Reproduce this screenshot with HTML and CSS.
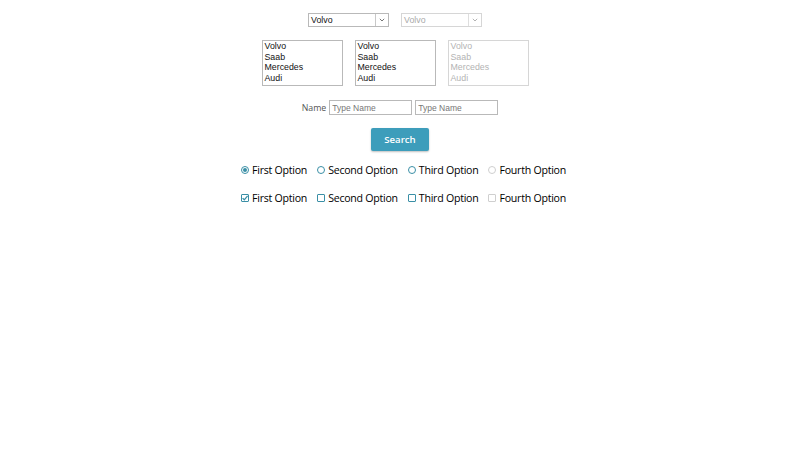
FILE: index.html
```html
<!DOCTYPE html>
<html lang="en">
<head>
<meta charset="utf-8">
<title>Form controls</title>
<link rel="stylesheet" href="styles.css">
</head>
<body>
<main class="page">
  <div class="row row-selects">
    <div class="select">
      <span class="select-value">Volvo</span>
      <span class="select-arrow"><svg width="6" height="4" viewBox="0 0 6 4"><path d="M0.8 0.8 L3 3 L5.2 0.8" fill="none" stroke="#666" stroke-width="0.9"/></svg></span>
    </div>
    <div class="select is-disabled">
      <span class="select-value">Volvo</span>
      <span class="select-arrow"><svg width="6" height="4" viewBox="0 0 6 4"><path d="M0.8 0.8 L3 3 L5.2 0.8" fill="none" stroke="#aaa" stroke-width="0.9"/></svg></span>
    </div>
  </div>

  <div class="row row-lists">
    <div class="listbox">
      <div>Volvo</div><div>Saab</div><div>Mercedes</div><div>Audi</div>
    </div>
    <div class="listbox">
      <div>Volvo</div><div>Saab</div><div>Mercedes</div><div>Audi</div>
    </div>
    <div class="listbox is-disabled">
      <div>Volvo</div><div>Saab</div><div>Mercedes</div><div>Audi</div>
    </div>
  </div>

  <div class="row row-name">
    <label class="name-label">Name</label>
    <input class="text-input" type="text" placeholder="Type Name">
    <input class="text-input" type="text" placeholder="Type Name">
  </div>

  <div class="row row-button">
    <button class="btn" type="button">Search</button>
  </div>

  <div class="row row-options">
    <span class="opt"><span class="radio is-checked"></span>First Option</span>
    <span class="opt"><span class="radio"></span>Second Option</span>
    <span class="opt"><span class="radio"></span>Third Option</span>
    <span class="opt"><span class="radio is-disabled"></span>Fourth Option</span>
  </div>

  <div class="row row-options row-checks">
    <span class="opt"><span class="check is-checked"><svg width="8" height="8" viewBox="0 0 8 8"><path d="M1.6 4.1 L3.3 5.8 L6.6 1.9" fill="none" stroke="#3a8fa6" stroke-width="1.3"/></svg></span>First Option</span>
    <span class="opt"><span class="check"></span>Second Option</span>
    <span class="opt"><span class="check"></span>Third Option</span>
    <span class="opt"><span class="check is-disabled"></span>Fourth Option</span>
  </div>
</main>
</body>
</html>
```

FILE: styles.css
```css
* { box-sizing: border-box; }

body {
  margin: 0;
  background: #fff;
  font-family: "Open Sans", "Liberation Sans", sans-serif;
  color: #222;
}

.page {
  padding-top: 13px;
}

.row {
  display: flex;
  justify-content: center;
  align-items: center;
}

/* selects */
.row-selects {
  gap: 12px;
  padding-right: 10px;
}

.select {
  width: 81px;
  height: 14px;
  border: 1px solid #b9b9b9;
  display: flex;
  align-items: stretch;
  font-family: "Liberation Sans", Arial, sans-serif;
  font-size: 8.8px;
  color: #111;
}

.select-value {
  flex: 1;
  padding-left: 2px;
  line-height: 12px;
}

.select-arrow {
  width: 13px;
  border-left: 1px solid #c8c8c8;
  display: flex;
  align-items: center;
  justify-content: center;
}

.select.is-disabled {
  border-color: #d6d6d6;
  color: #aaa;
}

.select.is-disabled .select-arrow {
  border-left-color: #dedede;
}

/* list boxes */
.row-lists {
  margin-top: 13px;
  gap: 12px;
  padding-right: 10px;
}

.listbox {
  width: 81px;
  height: 46px;
  border: 1px solid #b9b9b9;
  padding: 0 2px;
  font-family: "Liberation Sans", Arial, sans-serif;
  font-size: 8.8px;
  line-height: 10.7px;
  color: #111;
  overflow: hidden;
}

.listbox.is-disabled {
  border-color: #d6d6d6;
  color: #b3b3b3;
}

/* name row */
.row-name {
  margin-top: 14px;
  gap: 3px;
}

.name-label {
  font-size: 8.8px;
  color: #555;
}

.text-input {
  width: 83px;
  height: 15px;
  margin: 0;
  border: 1px solid #b9b9b9;
  padding: 0 2px;
  font-family: "Liberation Sans", Arial, sans-serif;
  font-size: 8.5px;
  color: #111;
  outline: none;
}

.text-input::placeholder {
  color: #777;
}

/* button */
.row-button {
  margin-top: 13px;
}

.btn {
  width: 58px;
  height: 23px;
  border: 0;
  border-radius: 2px;
  background: #3d9dbb;
  color: #fff;
  font-family: "Open Sans", sans-serif;
  font-size: 9.6px;
  font-weight: 600;
  box-shadow: 0 1px 2px rgba(0, 0, 0, 0.25);
  padding: 0;
}

/* radio / checkbox rows */
.row-options {
  margin-top: 12px;
  height: 14px;
  padding-left: 7px;
  gap: 10px;
  font-size: 10.6px;
  font-weight: 400;
  letter-spacing: -0.25px;
  color: #000;
}

.row-checks {
  margin-top: 14px;
}

.opt {
  display: inline-flex;
  align-items: center;
  gap: 3px;
  white-space: nowrap;
}

.radio {
  width: 8px;
  height: 8px;
  border: 1px solid #3a8fa6;
  border-radius: 50%;
  display: inline-flex;
  align-items: center;
  justify-content: center;
}

.radio.is-checked::after {
  content: "";
  width: 4px;
  height: 4px;
  border-radius: 50%;
  background: #3a8fa6;
}

.radio.is-disabled {
  border-color: #cfcfcf;
}

.check {
  width: 8px;
  height: 8px;
  border: 1px solid #3a8fa6;
  border-radius: 1px;
  display: inline-flex;
  align-items: center;
  justify-content: center;
  position: relative;
}

.check svg {
  position: absolute;
  left: -1px;
  top: -1px;
}

.check.is-disabled {
  border-color: #cfcfcf;
}
```
